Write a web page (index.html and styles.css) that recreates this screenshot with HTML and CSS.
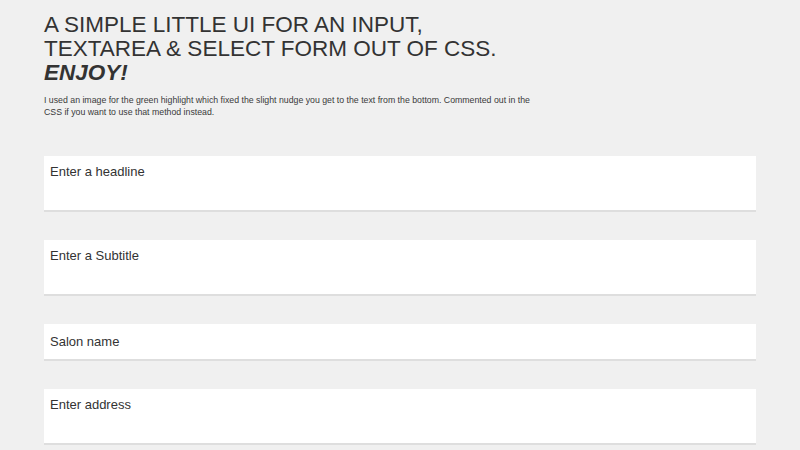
FILE: index.html
```html
<!DOCTYPE html>
<html lang="en">
<head>
<meta charset="utf-8">
<title>Simple form UI</title>
<link rel="stylesheet" href="styles.css">
</head>
<body>
<div class="page">
  <header class="intro">
    <h1>A simple little UI for an input,<br>textarea &amp; select form out of CSS.<br><em>Enjoy!</em></h1>
    <p>I used an image for the green highlight which fixed the slight nudge you get to the text from the bottom. Commented out in the CSS if you want to use that method instead.</p>
  </header>
  <form class="form">
    <textarea class="field area" placeholder="Enter a headline"></textarea>
    <textarea class="field area" placeholder="Enter a Subtitle"></textarea>
    <input class="field line" type="text" placeholder="Salon name">
    <textarea class="field area" placeholder="Enter address"></textarea>
  </form>
</div>
</body>
</html>
```

FILE: styles.css
```css
html, body {
  margin: 0;
  padding: 0;
  background: #f0f0f0;
  font-family: "Liberation Sans", Arial, sans-serif;
  color: #333;
}
.page {
  padding: 13px 44px 0;
}
.intro {
  width: 500px;
}
.intro h1 {
  margin: 0;
  font-size: 22.5px;
  line-height: 24.2px;
  font-weight: normal;
  text-transform: uppercase;
  color: #333;
}
.intro h1 em {
  font-weight: bold;
}
.intro p {
  margin: 8px 0 0;
  font-size: 8.75px;
  line-height: 12px;
  color: #3a3a3a;
}
.form {
  display: flex;
  flex-direction: column;
  gap: 28px;
  margin-top: 38px;
}
.field {
  display: block;
  box-sizing: border-box;
  width: 100%;
  margin: 0;
  border: none;
  border-bottom: 2px solid #dedede;
  background: #fff;
  font-family: "Liberation Sans", Arial, sans-serif;
  font-size: 13px;
  color: #333;
  outline: none;
  resize: none;
}
.field::placeholder {
  color: #333;
  opacity: 1;
}
.area {
  height: 56px;
  padding: 8px 6px 0;
  overflow: hidden;
}
.line {
  height: 37px;
  padding: 0 6px;
  line-height: 35px;
}
```
